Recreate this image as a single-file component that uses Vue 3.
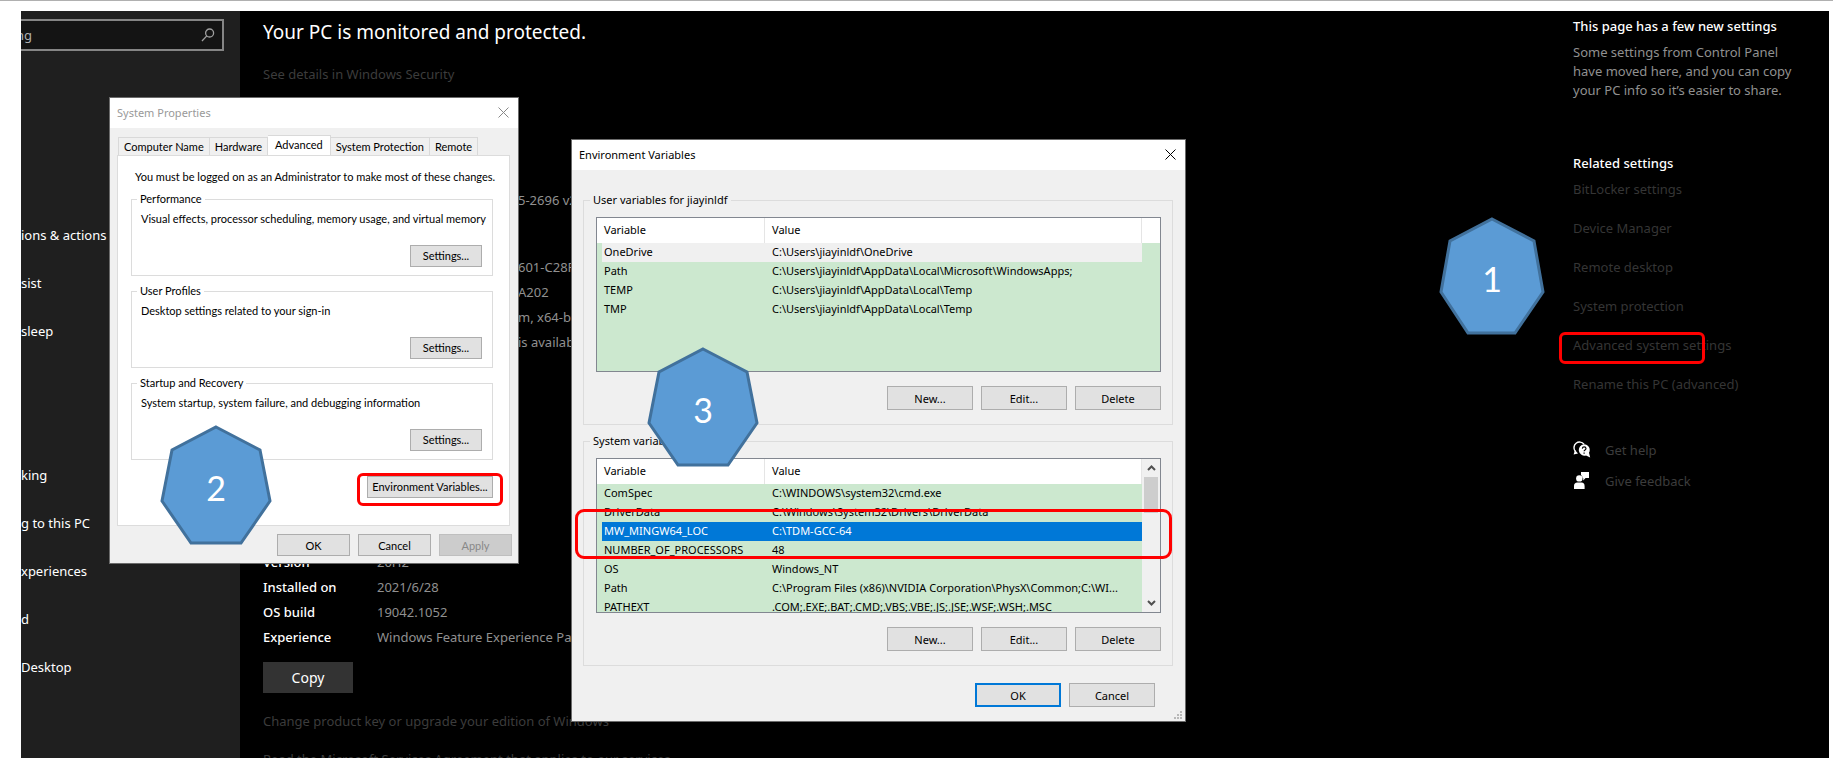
<template>
  <div class="page">
    <div class="screen">
      <nav class="sidebar">
        <div class="search">
          <input v-model="search" aria-label="Find a setting" />
          <svg width="14" height="14" viewBox="0 0 14 14" fill="none" stroke="#a0a0a0" stroke-width="1.3">
            <circle cx="8.6" cy="5" r="4" />
            <path d="M5.8 7.9 L1 13" />
          </svg>
        </div>
        <ul>
          <li v-for="(item, i) in navItems" :key="i"><a v-if="item" href="#">{{ item }}</a></li>
        </ul>
      </nav>

      <main class="about">
        <h1>Your PC is monitored and protected.</h1>
        <a class="dim" href="#">See details in Windows Security</a>
        <ul class="device">
          <li v-for="(spec, i) in deviceSpecs" :key="i">{{ spec }}</li>
        </ul>
        <dl>
          <template v-for="spec in windowsSpecs" :key="spec.label">
            <dt>{{ spec.label }}</dt>
            <dd>{{ spec.value }}</dd>
          </template>
        </dl>
        <button class="copy">Copy</button>
        <a class="dim product" href="#">Change product key or upgrade your edition of Windows</a>
        <a class="dim" href="#">Read the Microsoft Services Agreement that applies to our services</a>
      </main>

      <aside class="related">
        <h2>This page has a few new settings</h2>
        <p>Some settings from Control Panel have moved here, and you can copy your PC info so it’s easier to share.</p>
        <h2>Related settings</h2>
        <ul>
          <li v-for="link in relatedLinks" :key="link">
            <a href="#">{{ link }}</a>
            <span v-if="link === 'Advanced system settings'" class="mark"></span>
          </li>
        </ul>
        <a class="help" href="#">
          <svg width="18" height="17" viewBox="0 0 18 17">
            <path d="M2.2 10.2 A5.3 5.3 0 1 1 11 3.2" fill="none" stroke="#fff" stroke-width="1.4" />
            <path d="M2 9 L.6 13.6 L5 12.6" fill="#fff" />
            <path d="M11 3.2 a5.8 5.8 0 0 1 5 8.6 L17.2 16.4 L13 14.6 A5.8 5.8 0 1 1 11 3.2z" fill="#fff" />
            <path d="M9.3 7.6 q.2 -1.7 1.9 -1.7 t1.8 1.6 q0 .8 -1 1.4 t-.9 1.4 M11.1 11.4 v1.3" fill="none" stroke="#000" stroke-width="1.2" />
          </svg>
          Get help
        </a>
        <a class="help" href="#">
          <svg width="18" height="17" viewBox="0 0 18 17" fill="#fff">
            <path d="M8 0 H16 V6 H12.6 L10.2 8.4 V6 H9.6 A4 4 0 0 0 8 3z" />
            <circle cx="6.3" cy="6.4" r="3.2" />
            <path d="M1 17 V14 Q1 10.4 4.4 10.4 H8.4 Q11.6 10.4 11.6 14 V17z" />
          </svg>
          Give feedback
        </a>
        <div class="step step-one">
          <svg viewBox="0 0 106 118" preserveAspectRatio="none"><polygon points="53,2 95,24 104,75 76,116 29,116 2,75 11,24" /></svg>
          <span>1</span>
        </div>
      </aside>

      <section class="dialog properties">
        <header>
          <span>System Properties</span>
          <button class="close" aria-label="Close">
            <svg width="11" height="11" viewBox="0 0 11 11"><path d="M.5 .5 L10.5 10.5 M10.5 .5 L.5 10.5" /></svg>
          </button>
        </header>
        <div class="tabs">
          <button v-for="tab in tabs" :key="tab" :class="{ active: tab === activeTab }" @click="activeTab = tab">{{ tab }}</button>
        </div>
        <div class="panel">
          <p>You must be logged on as an Administrator to make most of these changes.</p>
          <fieldset v-for="group in groups" :key="group.title">
            <legend>{{ group.title }}</legend>
            <p>{{ group.text }}</p>
            <button class="btn">Settings...</button>
          </fieldset>
          <div class="env-button">
            <button class="btn">Environment Variables...</button>
            <span class="mark"></span>
          </div>
        </div>
        <footer>
          <button class="btn">OK</button>
          <button class="btn">Cancel</button>
          <button class="btn" disabled>Apply</button>
        </footer>
      </section>

      <section class="dialog environment">
        <header>
          <span>Environment Variables</span>
          <button class="close" aria-label="Close">
            <svg width="11" height="11" viewBox="0 0 11 11"><path d="M.5 .5 L10.5 10.5 M10.5 .5 L.5 10.5" /></svg>
          </button>
        </header>
        <div class="body">
          <fieldset v-for="list in variableLists" :key="list.title">
            <legend>{{ list.title }}</legend>
            <div class="list">
              <table>
                <thead>
                  <tr><th>Variable</th><th>Value</th></tr>
                </thead>
                <tbody>
                  <tr v-for="row in list.rows" :key="row[0]" :class="row[2]">
                    <td>{{ row[0] }}</td>
                    <td>{{ row[1] }}</td>
                  </tr>
                </tbody>
              </table>
              <div v-if="list.scroll" class="scrollbar">
                <svg width="9" height="6" viewBox="0 0 9 6"><path d="M1 5 L4.5 1.5 L8 5" /></svg>
                <div class="thumb"></div>
                <svg width="9" height="6" viewBox="0 0 9 6"><path d="M1 1 L4.5 4.5 L8 1" /></svg>
              </div>
              <div v-else class="corner"></div>
            </div>
            <div class="actions">
              <button class="btn">New...</button>
              <button class="btn">Edit...</button>
              <button class="btn">Delete</button>
            </div>
          </fieldset>
          <footer>
            <button class="btn primary">OK</button>
            <button class="btn">Cancel</button>
          </footer>
        </div>
        <svg class="grip" width="8" height="8" viewBox="0 0 8 8" fill="#b8b8b8">
          <path d="M6 0h2v2H6z M3 3h2v2H3z M6 3h2v2H6z M0 6h2v2H0z M3 6h2v2H3z M6 6h2v2H6z" />
        </svg>
        <span class="mark mark-row"></span>
      </section>

      <div class="step step-two">
        <svg viewBox="0 0 112 120" preserveAspectRatio="none"><polygon points="56,2 100,25 110,76 81,118 31,118 2,76 12,25" /></svg>
        <span>2</span>
      </div>
      <div class="step step-three">
        <svg viewBox="0 0 112 120" preserveAspectRatio="none"><polygon points="56,2 100,25 110,76 81,118 31,118 2,76 12,25" /></svg>
        <span>3</span>
      </div>
    </div>
  </div>
</template>

<script setup>
import { ref } from 'vue'

const search = ref('ng')
const activeTab = ref('Advanced')

const navItems = ['ions & actions', 'sist', 'sleep', '', '', 'king', 'g to this PC', 'xperiences', 'd', 'Desktop']
const deviceSpecs = ['5-2696 v2', '', '601-C28F', 'A202', 'm, x64-ba', 'is available']

const windowsSpecs = [
  { label: 'Version', value: '20H2' },
  { label: 'Installed on', value: '2021/6/28' },
  { label: 'OS build', value: '19042.1052' },
  { label: 'Experience', value: 'Windows Feature Experience Pack' }
]

const relatedLinks = [
  'BitLocker settings',
  'Device Manager',
  'Remote desktop',
  'System protection',
  'Advanced system settings',
  'Rename this PC (advanced)'
]

const tabs = ['Computer Name', 'Hardware', 'Advanced', 'System Protection', 'Remote']

const groups = [
  { title: 'Performance', text: 'Visual effects, processor scheduling, memory usage, and virtual memory' },
  { title: 'User Profiles', text: 'Desktop settings related to your sign-in' },
  { title: 'Startup and Recovery', text: 'System startup, system failure, and debugging information' }
]

const variableLists = [
  {
    title: 'User variables for jiayinldf',
    scroll: false,
    rows: [
      ['OneDrive', 'C:\\Users\\jiayinldf\\OneDrive', 'inactive'],
      ['Path', 'C:\\Users\\jiayinldf\\AppData\\Local\\Microsoft\\WindowsApps;'],
      ['TEMP', 'C:\\Users\\jiayinldf\\AppData\\Local\\Temp'],
      ['TMP', 'C:\\Users\\jiayinldf\\AppData\\Local\\Temp']
    ]
  },
  {
    title: 'System variables',
    scroll: true,
    rows: [
      ['ComSpec', 'C:\\WINDOWS\\system32\\cmd.exe'],
      ['DriverData', 'C:\\Windows\\System32\\Drivers\\DriverData'],
      ['MW_MINGW64_LOC', 'C:\\TDM-GCC-64', 'selected'],
      ['NUMBER_OF_PROCESSORS', '48'],
      ['OS', 'Windows_NT'],
      ['Path', 'C:\\Program Files (x86)\\NVIDIA Corporation\\PhysX\\Common;C:\\WI...'],
      ['PATHEXT', '.COM;.EXE;.BAT;.CMD;.VBS;.VBE;.JS;.JSE;.WSF;.WSH;.MSC']
    ]
  }
]
</script>

<style>
body {
  margin: 0;
  background: #fff;
}
</style>

<style scoped>
* {
  box-sizing: border-box;
}

.page {
  border-top: 1px solid #b0b0b0;
  padding: 10px 4px 16px 21px;
  height: 100vh;
  font-family: 'Noto Sans', 'Open Sans', sans-serif;
  font-size: 13px;
}

.screen {
  position: relative;
  display: flex;
  height: 100%;
  overflow: hidden;
  background: #000;
  color: #fff;
}

ul {
  list-style: none;
  margin: 0;
  padding: 0;
}

a {
  color: inherit;
  text-decoration: none;
}

button,
input {
  font: inherit;
}

h1,
h2,
p,
dl,
dd {
  margin: 0;
}

/* settings page */
.sidebar {
  flex: none;
  width: 219px;
  background: #1f1f1f;
}

.search {
  display: flex;
  align-items: center;
  width: 203px;
  height: 32px;
  margin-top: 8px;
  padding-right: 7px;
  border: 2px solid #858585;
  border-left: 0;
  background: #141414;
}

.search input {
  flex: 1;
  min-width: 0;
  padding: 0;
  border: 0;
  outline: 0;
  background: none;
  color: #b0b0b0;
  text-indent: -5px;
}

.sidebar ul {
  margin-top: 160px;
}

.sidebar li {
  height: 48px;
  line-height: 48px;
  white-space: nowrap;
}

.about {
  flex: 1;
  min-width: 0;
  padding: 7px 0 0 23px;
  white-space: nowrap;
}

h1 {
  margin-bottom: 18px;
  font-size: 19px;
  font-weight: 400;
  line-height: 28px;
}

.dim {
  display: block;
  line-height: 20px;
  color: #3c3c3c;
}

.device {
  margin-top: 104px;
  padding-left: 255px;
  color: #909090;
}

.device li {
  height: 25px;
  line-height: 25px;
}

.device li:nth-child(2) {
  height: 42px;
}

dl {
  display: grid;
  grid-template-columns: 114px 1fr;
  margin-top: 195px;
  line-height: 25px;
}

dt {
  font-weight: 500;
}

dd {
  color: #909090;
}

.copy {
  display: block;
  width: 90px;
  height: 31px;
  margin-top: 12px;
  border: 0;
  background: #333;
  color: #fff;
  font-size: 14px;
}

.product {
  margin: 18px 0;
}

.related {
  position: relative;
  flex: none;
  width: 256px;
  padding-top: 5px;
}

h2 {
  font-size: 13px;
  font-weight: 500;
  line-height: 20px;
}

.related p {
  width: 232px;
  margin: 7px 0 53px;
  line-height: 19px;
  color: #909090;
}

.related ul {
  margin-bottom: 27px;
}

.related li {
  position: relative;
  height: 39px;
  line-height: 32px;
  color: #353535;
}

.help {
  display: flex;
  align-items: center;
  gap: 14px;
  height: 31px;
  color: #3c3c3c;
}

/* red highlights and numbered steps */
.mark {
  position: absolute;
  border: 3px solid #f00;
  border-radius: 6px;
  pointer-events: none;
}

.related .mark {
  left: -14px;
  top: 3px;
  width: 146px;
  height: 32px;
}

.step {
  position: absolute;
  display: flex;
  align-items: center;
  justify-content: center;
  width: 112px;
  height: 120px;
  padding-top: 4px;
  font-family: Lato, sans-serif;
  font-size: 34px;
  color: #fff;
}

.step svg {
  position: absolute;
  inset: 0;
  width: 100%;
  height: 100%;
}

.step polygon {
  fill: #5b9bd5;
  stroke: #41719c;
  stroke-width: 3;
}

.step span {
  position: relative;
}

.step-one {
  left: -134px;
  top: 206px;
  width: 106px;
  height: 118px;
}

.step-two {
  left: 139px;
  top: 414px;
}

.step-three {
  left: 626px;
  top: 336px;
}

/* windows */
.dialog {
  position: absolute;
  border: 1px solid #6b6b6b;
  background: #f0f0f0;
  color: #000;
  font-size: 11px;
}

.dialog header {
  display: flex;
  align-items: center;
  justify-content: space-between;
  height: 30px;
  padding: 0 9px 2px 7px;
  background: #fff;
}

.close {
  display: flex;
  padding: 0;
  border: 0;
  background: none;
}

.close path {
  fill: none;
  stroke: currentColor;
}

.btn {
  height: 22px;
  padding: 0;
  border: 1px solid #adadad;
  background: #e1e1e1;
  color: #000;
}

.btn:disabled {
  border-color: #bfbfbf;
  background: #ccc;
  color: #888;
}

.btn.primary {
  border: 2px solid #0078d7;
}

fieldset {
  min-width: 0;
  margin: 0;
  border: 1px solid #dcdcdc;
}

.properties {
  left: 88px;
  top: 86px;
  width: 410px;
  padding-bottom: 7px;
  font-family: Lato, 'Liberation Sans', sans-serif;
}

.properties header {
  font-family: 'Noto Sans', 'Open Sans', sans-serif;
  color: #999;
}

.properties .close {
  color: #888;
}

.tabs {
  display: flex;
  align-items: flex-end;
  height: 27px;
  padding-left: 8px;
}

.tabs button {
  height: 18px;
  padding: 0 5px;
  border: 1px solid #d9d9d9;
  border-bottom: 0;
  border-left-width: 0;
  background: #f0f0f0;
  color: #000;
  white-space: nowrap;
}

.tabs button:first-child {
  border-left-width: 1px;
}

.tabs .active {
  height: 20px;
  padding: 0 7px 2px;
  background: #fff;
}

.panel {
  margin: 0 8px 8px 7px;
  padding: 14px 16px 27px 13px;
  border: 1px solid #dcdcdc;
  background: #fff;
  line-height: 14px;
  white-space: nowrap;
}

.panel > p {
  margin: 0 0 8px 4px;
}

.panel fieldset {
  margin-bottom: 8px;
  padding: 6px 10px 8px 9px;
}

.panel legend {
  margin-left: -4px;
  padding: 0 3px;
}

.panel fieldset .btn {
  display: block;
  width: 72px;
  margin: 19px 0 0 auto;
}

.env-button {
  position: relative;
  width: 126px;
  margin: 16px 0 0 auto;
}

.env-button .btn {
  display: block;
  width: 100%;
}

.env-button .mark {
  inset: -3px -10px -8px;
}

.properties footer {
  display: flex;
  justify-content: flex-end;
  gap: 8px;
  padding-right: 6px;
}

.properties footer .btn {
  width: 73px;
}

.environment {
  left: 550px;
  top: 128px;
  width: 615px;
}

.body {
  padding: 22px 12px 14px 11px;
}

.body fieldset {
  margin-bottom: 8px;
  padding: 9px 11px 14px 12px;
}

.body legend {
  margin-left: -6px;
  padding: 0 3px;
  line-height: 16px;
}

.list {
  display: flex;
  height: 155px;
  overflow: hidden;
  border: 1px solid #828790;
  background: #cce8cf;
}

table {
  flex: 1;
  align-self: flex-start;
  table-layout: fixed;
  border-spacing: 0;
}

th {
  height: 25px;
  padding: 0 0 2px 7px;
  border-right: 1px solid #e5e5e5;
  background: #fff;
  font-weight: 400;
  text-align: left;
}

th:first-child {
  width: 168px;
}

td {
  height: 19px;
  padding: 0 0 2px 7px;
  line-height: 17px;
  white-space: nowrap;
}

td:first-child {
  padding-left: 2px;
  border-left: 5px solid #cce8cf;
}

.inactive td {
  background: #f0f0f0;
}

.selected td {
  background: #0078d7;
  color: #fff;
}

.corner {
  width: 18px;
  height: 25px;
  background: #fff;
}

.scrollbar {
  display: flex;
  flex-direction: column;
  align-items: center;
  width: 18px;
  padding: 6px 0;
  background: #f0f0f0;
}

.scrollbar path {
  fill: none;
  stroke: #505050;
  stroke-width: 2;
}

.thumb {
  width: 14px;
  height: 36px;
  margin: 6px 0 auto;
  background: #cdcdcd;
}

.actions,
.environment footer {
  display: flex;
  justify-content: flex-end;
  gap: 8px;
  margin-top: 14px;
}

.environment footer {
  margin-top: 17px;
  padding-right: 18px;
}

.environment .btn {
  width: 86px;
  height: 24px;
}

.grip {
  position: absolute;
  right: 3px;
  bottom: 2px;
}

.mark-row {
  left: 3px;
  right: 13px;
  top: 369px;
  height: 50px;
  border-radius: 9px;
}
</style>
